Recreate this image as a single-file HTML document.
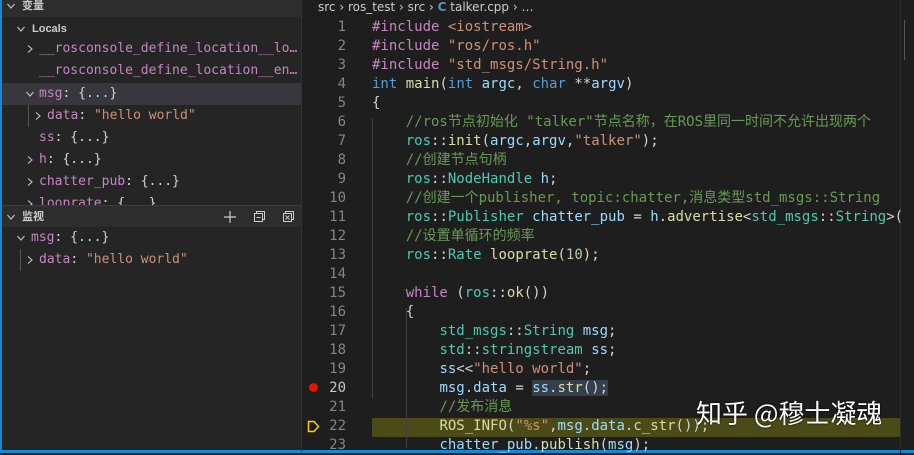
<!DOCTYPE html>
<html><head><meta charset="utf-8"><style>
*{margin:0;padding:0;box-sizing:border-box}
body{width:914px;height:453px;background:#1e1e1e;overflow:hidden;position:relative;font-family:"DejaVu Sans Mono","Liberation Mono","Noto Sans CJK SC",monospace}
#left{position:absolute;left:0;top:0;width:301px;height:453px;background:#252526;border-left:2px solid #1489d4;border-bottom:3px solid #1489d4}
.r{position:absolute;left:0;width:299px;height:22px;line-height:22px;font-size:13px;color:#d4d4d4;white-space:nowrap;overflow:hidden}
.h{font-family:"Liberation Sans","Noto Sans CJK SC",sans-serif;font-weight:bold;font-size:11px;color:#ccc}
.v{color:#c586c0}.s{color:#ce9178}
.ch{position:absolute;top:6px;width:10px;height:10px}
#ed{position:absolute;left:301px;top:0;right:0;height:453px;border-left:1px solid #333;border-bottom:3px solid #1489d4}
#bc{position:absolute;left:16px;top:0;height:16px;line-height:14px;font-size:12px;color:#ccc;font-family:"DejaVu Sans","Liberation Sans",sans-serif}
.ln{position:absolute;left:0;width:44px;text-align:right;font-size:14px;color:#858585;height:19px;line-height:19px}
.c{position:absolute;left:70px;font-size:14px;height:19px;line-height:19px;white-space:pre;color:#d4d4d4}
.k{color:#c586c0}.b{color:#569cd6}.t{color:#4ec9b0}.f{color:#dcdcaa}.va{color:#9cdcfe}.st{color:#ce9178}.cm{color:#6a9955}.n{color:#b5cea8}
</style></head><body>
<div id="left"></div>
<div id="ed">
<div id="bc">src › ros_test › src › <span style="color:#519aba;font-weight:bold">C</span> talker.cpp › …</div>
<div style="position:absolute;left:70px;top:418px;width:528px;height:19px;background:#4b4b18"></div>
<div style="position:absolute;left:598px;top:0;width:1px;height:453px;background:#2a2a2a"></div>
<div style="position:absolute;left:7px;top:383px;width:9px;height:9px;border-radius:50%;background:#e51400"></div>
<svg style="position:absolute;left:5px;top:420px" width="13" height="13"><path d="M1.5 1.5H7L11.5 6.5L7 11.5H1.5Z" fill="none" stroke="#ffcc00" stroke-width="1.5"/></svg>
<div style="position:absolute;left:70px;top:118px;width:1px;height:280px;background:#404040"></div>
<div style="position:absolute;left:104px;top:308px;width:1px;height:140px;background:#404040"></div>
<div style="position:absolute;left:602px;top:20px;width:8px;height:40px;border-left:1px solid #555"></div>
<div id="code"></div>
<div style="position:absolute;left:394px;top:394px;font-family:'Noto Sans CJK SC',sans-serif;font-size:26px;color:#fff;text-shadow:0 0 2px #000;white-space:nowrap">知乎 @穆士凝魂</div>
</div>
<script>
function chv(x,d){return '<svg class="ch" style="left:'+x+'px" viewBox="0 0 10 10"><path d="'+(d?'M1.5 3L5 7L8.5 3':'M3 1.5L7 5L3 8.5')+'" fill="none" stroke="#c5c5c5" stroke-width="1.1"/></svg>';}
var lp=''+
'<div class="r h" style="top:-5px;background:#2d2d2d;padding-left:20px">'+chv(4,1)+'变量</div>'+
'<div class="r h" style="top:18px;padding-left:30px">'+chv(14,1)+'Locals</div>'+
'<div class="r" style="top:38px;padding-left:37px">'+chv(23,0)+'<span class="v">__rosconsole_define_location__lo…</span></div>'+
'<div class="r" style="top:60px;padding-left:37px"><span class="v">__rosconsole_define_location__en…</span></div>'+
'<div class="r" style="top:83px;padding-left:37px;background:#37373d">'+chv(23,1)+'<span class="v">msg</span>: {...}</div>'+
'<div class="r" style="top:105px;padding-left:45px"><span style="position:absolute;left:26px;top:0;width:1px;height:22px;background:#555"></span>'+chv(31,0)+'<span class="v">data</span>: <span class="s">"hello world"</span></div>'+
'<div class="r" style="top:127px;padding-left:37px"><span class="v">ss</span>: {...}</div>'+
'<div class="r" style="top:149px;padding-left:37px">'+chv(23,0)+'<span class="v">h</span>: {...}</div>'+
'<div class="r" style="top:171px;padding-left:37px">'+chv(23,0)+'<span class="v">chatter_pub</span>: {...}</div>'+
'<div class="r" style="top:193px;padding-left:37px;height:12px">'+chv(23,0)+'<span class="v">looprate</span>: {...}</div>'+
'<div class="r h" style="top:205px;background:#2d2d2d;padding-left:20px;border-top:1px solid #3c3c3c">'+chv(4,1)+'监视'+
'<svg style="position:absolute;left:222px;top:5px" width="12" height="12"><path d="M6 0V12M0 6H12" stroke="#ccc" stroke-width="1.2"/></svg>'+
'<svg style="position:absolute;left:251px;top:4px" width="13" height="13"><path d="M3.5 3.5V1.5H11.5V9.5H9.5M1.5 3.5H9.5V11.5H1.5ZM3.5 7.5H7.5" fill="none" stroke="#ccc"/></svg>'+
'<svg style="position:absolute;left:280px;top:4px" width="13" height="13"><path d="M3.5 3.5V1.5H11.5V9.5H9.5M1.5 3.5H9.5V11.5H1.5ZM3.5 5.5L7.5 9.5M7.5 5.5L3.5 9.5" fill="none" stroke="#ccc"/></svg></div>'+
'<div class="r" style="top:227px;padding-left:29px">'+chv(14,1)+'<span class="v">msg</span>: {...}</div>'+
'<div class="r" style="top:249px;padding-left:37px"><span style="position:absolute;left:18px;top:0;width:1px;height:22px;background:#555"></span>'+chv(23,0)+'<span class="v">data</span>: <span class="s">"hello world"</span></div>';
document.getElementById('left').innerHTML=lp;
var L=[
'<span class="k">#include</span> <span class="st">&lt;iostream&gt;</span>',
'<span class="k">#include</span> <span class="st">"ros/ros.h"</span>',
'<span class="k">#include</span> <span class="st">"std_msgs/String.h"</span>',
'<span class="b">int</span> <span class="f">main</span>(<span class="b">int</span> <span class="va">argc</span>, <span class="b">char</span> **<span class="va">argv</span>)',
'{',
'    <span class="cm">//ros节点初始化 "talker"节点名称，在ROS里同一时间不允许出现两个</span>',
'    <span class="t">ros</span>::<span class="f">init</span>(<span class="va">argc</span>,<span class="va">argv</span>,<span class="st">"talker"</span>);',
'    <span class="cm">//创建节点句柄</span>',
'    <span class="t">ros</span>::<span class="t">NodeHandle</span> <span class="va">h</span>;',
'    <span class="cm">//创建一个publisher, topic:chatter,消息类型std_msgs::String</span>',
'    <span class="t">ros</span>::<span class="t">Publisher</span> <span class="va">chatter_pub</span> = <span class="va">h</span>.<span class="f">advertise</span>&lt;<span class="t">std_msgs</span>::<span class="t">String</span>&gt;(',
'    <span class="cm">//设置单循环的频率</span>',
'    <span class="t">ros</span>::<span class="t">Rate</span> <span class="f">looprate</span>(<span class="n">10</span>);',
'',
'    <span class="k">while</span> (<span class="t">ros</span>::<span class="f">ok</span>())',
'    {',
'        <span class="t">std_msgs</span>::<span class="t">String</span> <span class="va">msg</span>;',
'        <span class="t">std</span>::<span class="t">stringstream</span> <span class="va">ss</span>;',
'        <span class="va">ss</span>&lt;&lt;<span class="st">"hello world"</span>;',
'        <span class="va">msg</span>.<span class="va">data</span> = <span style="background:#343f4a"><span class="va">ss</span>.<span class="f">str</span>();</span>',
'        <span class="cm">//发布消息</span>',
'        <span class="f">ROS_INFO</span>(<span class="st">"%s"</span>,<span class="va">msg</span>.<span class="va">data</span>.<span class="f">c_str</span>());',
'        <span class="va">chatter_pub</span>.<span class="f">publish</span>(<span class="va">msg</span>);'];
var h='';for(var i=0;i<L.length;i++){var y=18+i*19;h+='<div class="ln" style="top:'+y+'px'+(i==19?';color:#c6c6c6':'')+'">'+(i+1)+'</div><div class="c" style="top:'+y+'px">'+L[i]+'</div>';}
document.getElementById('code').innerHTML=h;
</script>
</body></html>
